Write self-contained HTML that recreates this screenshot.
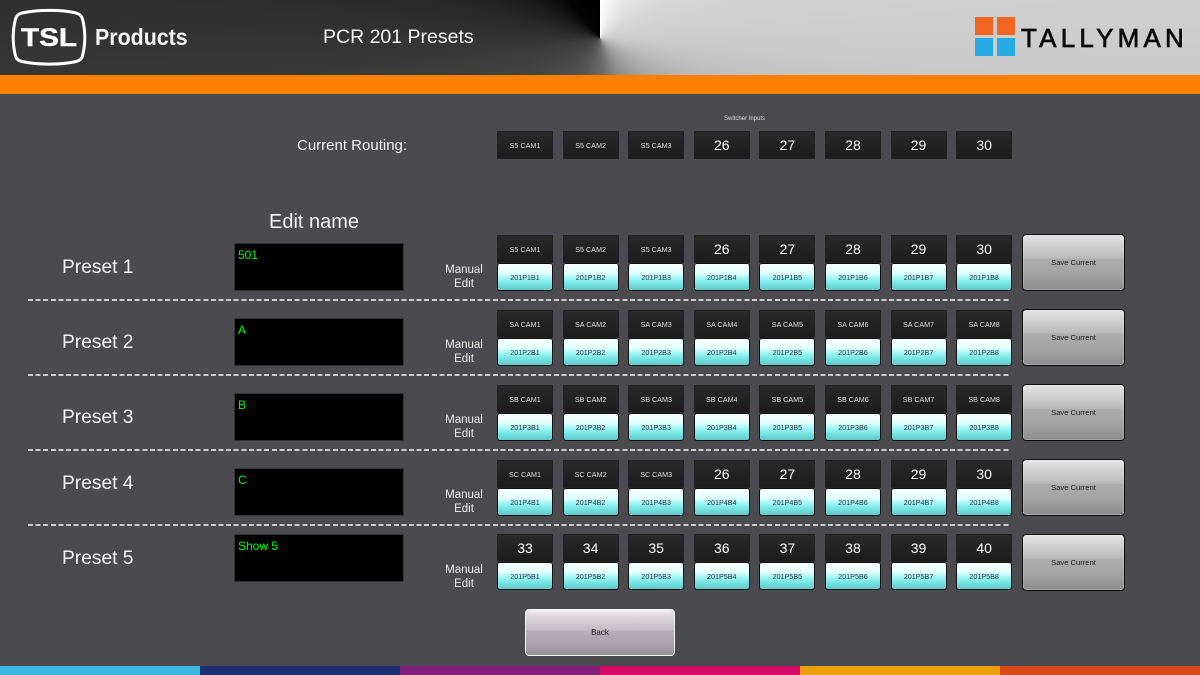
<!DOCTYPE html>
<html lang="en">
<head>
<meta charset="utf-8">
<title>PCR 201 Presets</title>
<style>
*{box-sizing:border-box}
html,body{margin:0;padding:0}
body{width:1200px;height:675px;overflow:hidden;position:relative;background:#4a4a4f;font-family:"Liberation Sans",sans-serif;color:#fff}
.abs{position:absolute}
#hdr{left:0;top:0;width:1200px;height:75px;background:conic-gradient(from 0deg at 600px 38px,#fff 0deg,#e8e8e8 30deg,#d8d8d8 60deg,#cdcdcd 90deg,#c0c0c0 105deg,#aaa 125deg,#909090 150deg,#6c6c6c 175deg,#585858 200deg,#4c4c4c 225deg,#3c3c3c 260deg,#2a2a2a 280deg,#181818 300deg,#040404 320deg,#000 359.9deg)}
#ora{left:0;top:75px;width:1200px;height:18.5px;background:#ff8000}
.t{white-space:nowrap;line-height:1}
.row{position:absolute;left:497px;display:grid;grid-template-columns:repeat(8,56px);column-gap:9.6px}
.k,.y{display:flex;align-items:center;justify-content:center;white-space:nowrap}
.k{height:28px;background:linear-gradient(#2a2a2a,#1b1b1b);color:#ddd;font-size:7.2px;box-shadow:inset 0 0 0 1px #222;border-radius:1px}
.k.n{font-size:14px;color:#fff}
.y{height:28px;margin-top:0;border:1px solid #111;border-radius:3px;background:linear-gradient(#f8ffff 0,#e2ffff 35%,#a0f6f6 55%,#78e4e4 75%,#5fc8c8 100%);color:#234;font-size:7.2px;grid-row:2}
.dash{position:absolute;left:28px;width:981px;height:2px;background:repeating-linear-gradient(90deg,#ccc 0 5px,transparent 5px 7.62px)}
.p{position:absolute;left:62px;font-size:19.2px;line-height:1;color:#f4f4f4}
.e{position:absolute;left:234px;width:170px;height:48px;background:#000;border:1px solid #333338;color:#0f0;font-size:12px;line-height:1;padding:5px 3px}
.m{position:absolute;left:434px;width:60px;text-align:center;font-size:11.5px;line-height:14px;color:#eee}
.s{position:absolute;left:1022px;width:103px;height:57px;border:1.5px solid #0c0c0c;border-radius:4px;background:linear-gradient(#e4e4e4 0,#d8d8d8 12%,#bababa 42%,#adadad 44%,#a4a4a4 70%,#8c8c8c 100%);box-shadow:inset 0 0 0 1px rgba(255,255,255,.2);color:#1c1c1c;font-size:7.6px;display:flex;align-items:center;justify-content:center}
#back{left:525px;top:609px;width:150px;height:47px;border:1px solid #f4f4f4;border-radius:4px;background:linear-gradient(#f4f0f4 0,#dcd6dc 15%,#c4bec5 44%,#b7afb8 47%,#a89fa8 80%,#968e96 100%);color:#222;font-size:8px;display:flex;align-items:center;justify-content:center}
#bar{left:0;top:666px;width:1200px;height:9px;display:flex}
#bar i{display:block;width:200px;height:9px}
</style>
</head>
<body>
<div id="hdr" class="abs"></div>
<div id="ora" class="abs"></div>

<svg class="abs" style="left:0;top:0" width="100" height="75" viewBox="0 0 100 75">
<path d="M22 13 C38 9.500 62 9.500 76 13 C80 14 81.500 16 82.500 19 C85.500 31 85.500 44 82.500 56 C81.500 59 80 60.500 76 61.500 C62 65 38 65 22 61.500 C18 60.500 16.500 59 15.500 56 C12.500 44 12.500 31 15.500 19 C16.500 16 18 14 22 13 Z" fill="none" stroke="#fff" stroke-width="3"/>
<text x="49" y="46" text-anchor="middle" font-family="Liberation Sans" font-weight="700" font-size="25" textLength="56" lengthAdjust="spacingAndGlyphs" fill="#fff" stroke="#fff" stroke-width=".4">TSL</text>
</svg>
<div class="abs t" style="left:95px;top:26px;font-size:23.5px;font-weight:700;color:#f6f6f6;transform:scaleX(.91);transform-origin:0 0">Products</div>
<div class="abs t" style="left:323px;top:28px;font-size:19.5px;color:#f4f4f4">PCR 201 Presets</div>

<div class="abs" style="left:975px;top:17px;width:18px;height:18px;background:#f26522"></div>
<div class="abs" style="left:996.500px;top:17px;width:18px;height:18px;background:#f26522"></div>
<div class="abs" style="left:975px;top:38px;width:18px;height:18px;background:#27aae1"></div>
<div class="abs" style="left:996.500px;top:38px;width:18px;height:18px;background:#27aae1"></div>
<div class="abs t" style="left:1021px;top:25px;font-size:26px;color:#0a0a0a;letter-spacing:4.200px;font-weight:400;-webkit-text-stroke:.7px #0a0a0a">TALLYMAN</div>

<div class="abs t" style="left:724px;top:116px;font-size:6px;color:#ddd">Switcher Inputs</div>
<div class="abs t" style="left:297px;top:138px;font-size:15px;color:#f2f2f2">Current Routing:</div>
<div class="row" style="top:131px">
<div class="k">S5 CAM1</div><div class="k">S5 CAM2</div><div class="k">S5 CAM3</div><div class="k n">26</div><div class="k n">27</div><div class="k n">28</div><div class="k n">29</div><div class="k n">30</div>
</div>

<div class="abs t" style="left:269px;top:212px;font-size:20px;color:#f4f4f4">Edit name</div>

<!-- Preset 1 -->
<div class="p" style="top:258px">Preset 1</div>
<div class="e" style="top:243px">501</div>
<div class="m" style="top:263px">Manual<br>Edit</div>
<div class="row" style="top:235px">
<div class="k">S5 CAM1</div><div class="k">S5 CAM2</div><div class="k">S5 CAM3</div><div class="k n">26</div><div class="k n">27</div><div class="k n">28</div><div class="k n">29</div><div class="k n">30</div>
<div class="y">201P1B1</div><div class="y">201P1B2</div><div class="y">201P1B3</div><div class="y">201P1B4</div><div class="y">201P1B5</div><div class="y">201P1B6</div><div class="y">201P1B7</div><div class="y">201P1B8</div>
</div>
<div class="s" style="top:234px">Save Current</div>
<div class="dash" style="top:299px"></div>

<!-- Preset 2 -->
<div class="p" style="top:333px">Preset 2</div>
<div class="e" style="top:318px">A</div>
<div class="m" style="top:338px">Manual<br>Edit</div>
<div class="row" style="top:310px">
<div class="k">SA CAM1</div><div class="k">SA CAM2</div><div class="k">SA CAM3</div><div class="k">SA CAM4</div><div class="k">SA CAM5</div><div class="k">SA CAM6</div><div class="k">SA CAM7</div><div class="k">SA CAM8</div>
<div class="y">201P2B1</div><div class="y">201P2B2</div><div class="y">201P2B3</div><div class="y">201P2B4</div><div class="y">201P2B5</div><div class="y">201P2B6</div><div class="y">201P2B7</div><div class="y">201P2B8</div>
</div>
<div class="s" style="top:309px">Save Current</div>
<div class="dash" style="top:374px"></div>

<!-- Preset 3 -->
<div class="p" style="top:408px">Preset 3</div>
<div class="e" style="top:393px">B</div>
<div class="m" style="top:413px">Manual<br>Edit</div>
<div class="row" style="top:385px">
<div class="k">SB CAM1</div><div class="k">SB CAM2</div><div class="k">SB CAM3</div><div class="k">SB CAM4</div><div class="k">SB CAM5</div><div class="k">SB CAM6</div><div class="k">SB CAM7</div><div class="k">SB CAM8</div>
<div class="y">201P3B1</div><div class="y">201P3B2</div><div class="y">201P3B3</div><div class="y">201P3B4</div><div class="y">201P3B5</div><div class="y">201P3B6</div><div class="y">201P3B7</div><div class="y">201P3B8</div>
</div>
<div class="s" style="top:384px">Save Current</div>
<div class="dash" style="top:449px"></div>

<!-- Preset 4 -->
<div class="p" style="top:474px">Preset 4</div>
<div class="e" style="top:468px">C</div>
<div class="m" style="top:488px">Manual<br>Edit</div>
<div class="row" style="top:460px">
<div class="k">SC CAM1</div><div class="k">SC CAM2</div><div class="k">SC CAM3</div><div class="k n">26</div><div class="k n">27</div><div class="k n">28</div><div class="k n">29</div><div class="k n">30</div>
<div class="y">201P4B1</div><div class="y">201P4B2</div><div class="y">201P4B3</div><div class="y">201P4B4</div><div class="y">201P4B5</div><div class="y">201P4B6</div><div class="y">201P4B7</div><div class="y">201P4B8</div>
</div>
<div class="s" style="top:459px">Save Current</div>
<div class="dash" style="top:524px"></div>

<!-- Preset 5 -->
<div class="p" style="top:549px">Preset 5</div>
<div class="e" style="top:534px">Show 5</div>
<div class="m" style="top:563px">Manual<br>Edit</div>
<div class="row" style="top:534px">
<div class="k n">33</div><div class="k n">34</div><div class="k n">35</div><div class="k n">36</div><div class="k n">37</div><div class="k n">38</div><div class="k n">39</div><div class="k n">40</div>
<div class="y">201P5B1</div><div class="y">201P5B2</div><div class="y">201P5B3</div><div class="y">201P5B4</div><div class="y">201P5B5</div><div class="y">201P5B6</div><div class="y">201P5B7</div><div class="y">201P5B8</div>
</div>
<div class="s" style="top:534px">Save Current</div>

<div id="back" class="abs">Back</div>

<div id="bar" class="abs">
<i style="background:#3cb4e0"></i><i style="background:#1c2f70"></i><i style="background:#832079"></i><i style="background:#d80a68"></i><i style="background:#e9a00c"></i><i style="background:#d9481a"></i>
</div>
</body>
</html>
